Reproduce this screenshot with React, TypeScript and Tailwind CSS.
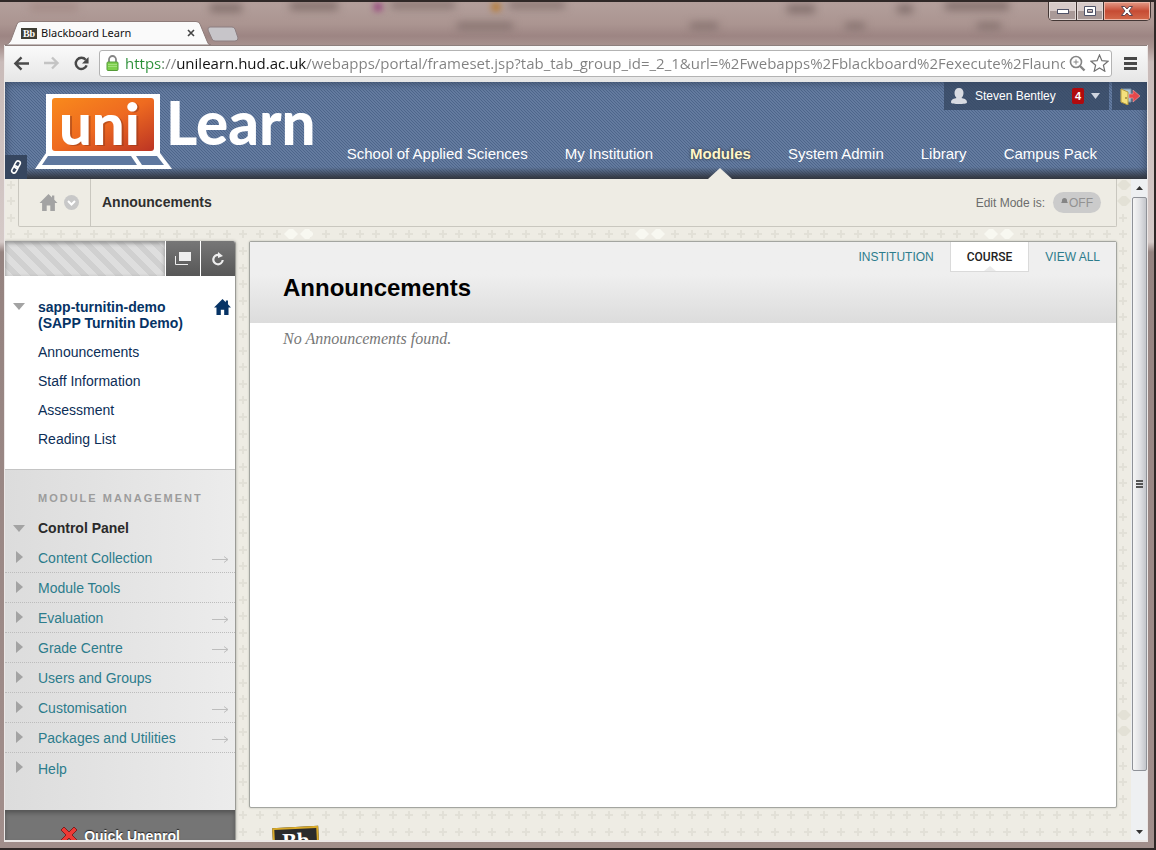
import React from "react";

const URL_TEXT =
  "https://unilearn.hud.ac.uk/webapps/portal/frameset.jsp?tab_tab_group_id=_2_1&url=%2Fwebapps%2Fblackboard%2Fexecute%2Flauncher%3Ftype%3DCourse";

const NAV = [
  "School of Applied Sciences",
  "My Institution",
  "Modules",
  "System Admin",
  "Library",
  "Campus Pack",
];

const MENU = ["Announcements", "Staff Information", "Assessment", "Reading List"];

const PANEL = [
  { label: "Content Collection", arrow: true },
  { label: "Module Tools", arrow: false },
  { label: "Evaluation", arrow: true },
  { label: "Grade Centre", arrow: true },
  { label: "Users and Groups", arrow: false },
  { label: "Customisation", arrow: true },
  { label: "Packages and Utilities", arrow: true },
  { label: "Help", arrow: false },
];

function HomeIcon({ className }: { className: string }) {
  return (
    <svg viewBox="0 0 18 17" className={className} fill="currentColor" aria-hidden="true">
      <path d="M9 0 12.500 3.400V1.500h2.300v4.200L18 9h-2.600v8H10.800v-5.500H7.200V17H2.600V9H0z" />
    </svg>
  );
}

function UniLogo() {
  return (
    <svg width="290" height="80" viewBox="0 0 290 80" role="img" aria-label="uniLearn">
      <defs>
        <linearGradient id="screen" x1="0" y1="0" x2="1" y2="1">
          <stop offset="0" stopColor="#f98a1c" />
          <stop offset="0.5" stopColor="#ee6a20" />
          <stop offset="1" stopColor="#bb3424" />
        </linearGradient>
      </defs>
      <rect x="11" y="2" width="114" height="61" fill="#fff" />
      <rect x="17" y="6" width="102" height="53" rx="3" fill="url(#screen)" />
      <path d="M11 61h114l12 16H0z" fill="#fff" />
      <path d="M13 64h83l6 9H7z" fill="#5f789f" />
      <path d="M101 64h21l7 9h-22z" fill="#5f789f" />
      <g fontFamily="Lato, 'Open Sans', sans-serif" fontWeight="900">
        <text x="26" y="54" fontSize="58" fill="#8f3a1a" opacity="0.5">uni</text>
        <text x="24" y="53" fontSize="58" fill="#fff">uni</text>
        <text x="131" y="53" fontSize="60" fill="#fff">Learn</text>
      </g>
    </svg>
  );
}

function Crosses() {
  const offsets = [6, 23, 39, 56, 72];
  const rows = [6, 22, 39, 55, 72];
  const bright = [[286, 55], [302, 55], [637, 55], [653, 55], [986, 55], [1002, 55], [1119, 6], [1119, 22], [1119, 536], [1119, 552]];
  return (
    <svg className="absolute inset-0 size-full" aria-hidden="true">
      <defs>
        <pattern id="crosses" width="83" height="83" patternUnits="userSpaceOnUse">
          {offsets.map((x) =>
            rows.map((y) => (
              <path key={`${x}-${y}`} d={`M${x - 4} ${y}h8M${x} ${y - 4}v8`} stroke="#e2e0d7" strokeWidth="2" />
            )),
          )}
        </pattern>
      </defs>
      <rect width="100%" height="100%" fill="url(#crosses)" />
      {bright.map(([x, y]) => (
        <path key={`${x}-${y}`} d={`M${x - 7} ${y}l5-5h4l5 5-5 5h-4z`} fill={x > 1100 ? "#e3e1d6" : "#f8f8f1"} />
      ))}
    </svg>
  );
}

function TitleBar() {
  return (
    <div className="relative flex h-[45px] items-end">
      <div className="absolute inset-0 overflow-hidden" aria-hidden="true">
        <div className="absolute top-[3px] left-[25px] h-2 w-12 bg-[#a38a86] blur-[4px]" />
        <div className="absolute top-[4px] left-[205px] h-2 w-8 bg-[#806d69] blur-[4px]" />
        <div className="absolute top-[2px] left-[285px] h-2 w-12 bg-[#806d69] blur-[4px]" />
        <div className="absolute top-[3px] left-[369px] size-2 bg-[#96437c] blur-[3px]" />
        <div className="absolute top-[2px] left-[386px] h-1.5 w-16 bg-[#7f6c69] blur-[4px]" />
        <div className="absolute top-[3px] left-[487px] size-2 bg-[#b8792c] blur-[3px]" />
        <div className="absolute top-[2px] left-[504px] h-1.5 w-14 bg-[#7f6c69] blur-[4px]" />
        <div className="absolute top-[23px] left-[452px] h-1.5 w-14 bg-[#7f6c69] blur-[4px]" />
        <div className="absolute top-[23px] left-[685px] h-1.5 w-7 bg-[#7f6c69] blur-[4px]" />
        <div className="absolute top-[5px] left-[782px] h-2 w-7 bg-[#7f6c69] blur-[4px]" />
        <div className="absolute top-[23px] left-[840px] h-1.5 w-5 bg-[#7f6c69] blur-[4px]" />
        <div className="absolute top-[5px] left-[892px] h-2 w-4 bg-[#7f6c69] blur-[4px]" />
        <div className="absolute top-[2px] left-[940px] h-2 w-16 bg-[#7f6c69] blur-[4px]" />
        <div className="absolute top-[23px] left-[972px] h-1.5 w-6 bg-[#7f6c69] blur-[4px]" />
      </div>
      <div className="relative flex h-6 w-[206px] items-center gap-1 pr-3 pl-4">
        <svg className="absolute inset-0 size-full" viewBox="0 0 206 24" preserveAspectRatio="none" aria-hidden="true">
          <path d="M0 24C4 23 5 21 6 19L12 3Q13 .5 16 .5H191Q194 .5 195 3L202 20Q203 24 206 24z" fill="#fafafa" stroke="#8d7b79" />
        </svg>
        <span className="relative flex h-[11px] w-4 items-center justify-center bg-[#3e3e35] font-['Liberation_Serif',serif] text-[10px] font-bold text-white">
          Bb
        </span>
        <span className="relative flex-1 font-['Noto_Sans','Open_Sans',sans-serif] text-[11px] text-[#111]">Blackboard Learn</span>
        <button aria-label="Close tab" className="relative p-1">
          <svg width="8" height="8" viewBox="0 0 8 8" stroke="#444" strokeWidth="1.600" aria-hidden="true">
            <path d="M1 1l6 6M7 1 1 7" />
          </svg>
        </button>
      </div>
      <button aria-label="New tab" className="relative -ml-1 self-end pb-[3px]">
        <svg width="32" height="16" viewBox="0 0 32 16" aria-hidden="true">
          <path d="M3 1h22q2 0 3 2l3 9q0 3-3 3H8q-2 0-3-2L1 4q-.5-3 2-3z" fill="#c7c5c9" stroke="#8d7f81" />
        </svg>
      </button>
      <div className="relative mt-[2px] mr-[3px] ml-auto flex h-[19px] self-start overflow-hidden rounded-b-[5px] border border-t-0 border-[#433735] text-white">
        <button aria-label="Minimise" className="flex w-7 items-center justify-center border-r border-[#433735] bg-linear-to-b from-[#d7cac8] from-50% to-[#a99997] to-50% shadow-[inset_0_0_0_1px_#e2d8d6]">
          <svg width="12" height="5" viewBox="0 0 12 5" aria-hidden="true">
            <rect x=".5" y=".5" width="11" height="4" fill="#fff" stroke="#505368" />
          </svg>
        </button>
        <button aria-label="Restore" className="flex w-[27px] items-center justify-center border-r border-[#433735] bg-linear-to-b from-[#d7cac8] from-50% to-[#a99997] to-50% shadow-[inset_0_0_0_1px_#e2d8d6]">
          <svg width="12" height="10" viewBox="0 0 12 10" aria-hidden="true">
            <path fillRule="evenodd" d="M.5.5h11v9H.5zM3.500 3.500v3h5v-3z" fill="#fff" stroke="#505368" />
          </svg>
        </button>
        <button aria-label="Close window" className="flex w-[46px] items-center justify-center bg-linear-to-b from-[#e39a88] from-0% via-[#c64b34] via-50% to-[#d3694b] shadow-[inset_0_0_0_1px_#eeb5a6]">
          <svg width="12" height="10" viewBox="0 0 12 10" aria-hidden="true">
            <path d="M.5.5h3.300L6 3 8.200.5h3.300L8 5l3.500 4.500H8.200L6 7 3.800 9.500H.5L4 5z" fill="#fff" stroke="#5d4450" />
          </svg>
        </button>
      </div>
    </div>
  );
}

function Toolbar() {
  return (
    <div className="flex h-[37px] shrink-0 items-center border-t border-[#8d7f7d] bg-linear-to-b from-[#fafafa] to-[#e6e6e6] pr-2.5 pb-0.5 pl-2">
      <button aria-label="Back" className="mr-3.5">
        <svg width="17" height="15" viewBox="0 0 18 16" fill="none" stroke="#4a4a4a" strokeWidth="2.600" aria-hidden="true">
          <path d="M17 8H3M9 1.500 2.500 8 9 14.500" />
        </svg>
      </button>
      <button aria-label="Forward" className="mr-3.5">
        <svg width="16" height="14" viewBox="0 0 16 14" fill="none" stroke="#c4c4c4" strokeWidth="2.400" aria-hidden="true">
          <path d="M0 7h13M8 1.500 13.500 7 8 12.500" />
        </svg>
      </button>
      <button aria-label="Reload" className="mr-2.5">
        <svg width="15" height="15" viewBox="0 0 16 16" aria-hidden="true">
          <path d="M12.500 4A6 6 0 1 0 13.500 10" fill="none" stroke="#484848" strokeWidth="2.600" />
          <path d="M15.500 1v7h-7z" fill="#484848" />
        </svg>
      </button>
      <div className="flex h-[27px] min-w-0 flex-1 items-center rounded-[3px] border border-[#b3b3b3] bg-white px-1.5 font-['Open_Sans','Noto_Sans',sans-serif] text-[15px]">
        <svg width="13" height="16" viewBox="0 0 13 16" className="mr-1.5 shrink-0" aria-hidden="true">
          <path d="M3 8V4.500a3.500 3.500 0 0 1 7 0V8" fill="none" stroke="#858585" strokeWidth="1.800" />
          <rect x="1" y="7" width="11" height="8.500" rx="1" fill="#7ed04c" stroke="#559b38" />
          <path d="M2 9.500h9M2 11.500h9" stroke="#a3e07c" />
        </svg>
        <input
          aria-label="Address"
          readOnly
          value={URL_TEXT}
          className="min-w-0 flex-1 bg-[linear-gradient(to_right,#2a8f38_0_38px,#808080_38px_51px,#111_51px_182px,#808080_182px)] bg-clip-text text-transparent outline-none"
        />
        <svg width="17" height="17" viewBox="0 0 17 17" fill="none" stroke="#858585" className="mr-1 ml-1 shrink-0" aria-hidden="true">
          <circle cx="7" cy="7" r="5.500" strokeWidth="1.600" />
          <path d="M4.500 7h5M7 4.500v5" />
          <path d="m11 11 4.500 4.500" strokeWidth="2.400" />
        </svg>
        <svg width="19" height="18" viewBox="0 0 19 18" fill="none" stroke="#707070" strokeWidth="1.200" className="-mr-1 shrink-0" aria-hidden="true">
          <path d="m9.500 1 2.400 5.700 6.100.5-4.600 4 1.400 6-5.300-3.300-5.300 3.300 1.400-6-4.600-4 6.100-.5z" />
        </svg>
      </div>
      <button aria-label="Menu" className="ml-3 flex w-[13px] flex-col gap-0.5">
        <span className="h-[3px] bg-[#484848]" />
        <span className="h-[3px] bg-[#484848]" />
        <span className="h-[3px] bg-[#484848]" />
      </button>
    </div>
  );
}

function Header() {
  return (
    <header className="relative flex h-[97px] shrink-0 items-stretch justify-between overflow-hidden bg-[linear-gradient(45deg,#647b9f_0_25%,#4d658a_25%_50%,#647b9f_50%_75%,#4d658a_75%)] bg-size-[3px_3px] shadow-[inset_0_0_9px_#34425a]">
      <div className="absolute inset-x-0 bottom-0 h-3 bg-linear-to-b from-transparent to-[#33373f]" />
      <a href="#home" className="relative ml-[30px] mt-2.5 block">
        <UniLogo />
      </a>
      <a href="#link" aria-label="Permanent link" className="absolute bottom-0 left-0 flex h-6 w-[22px] items-center justify-center bg-[#36465f]">
        <svg width="12" height="14" viewBox="0 0 12 14" fill="none" stroke="#fff" strokeWidth="1.600" aria-hidden="true">
          <rect x="5" y="0.800" width="4.600" height="7.400" rx="2.300" transform="rotate(30 7.300 4.500)" />
          <rect x="2.400" y="5.800" width="4.600" height="7.400" rx="2.300" transform="rotate(30 4.700 9.500)" />
        </svg>
      </a>
      <div className="relative flex flex-col items-end justify-between">
        <div className="flex h-7 text-[12px] text-white">
          <button className="flex w-[165px] items-center bg-[#34455f]/75 pr-[9px] pl-1.5">
            <svg width="18" height="17" viewBox="0 0 18 17" fill="#d8dbe2" aria-hidden="true">
              <path d="M9 0c3 0 4.500 2 4.500 5 0 2.300-1 4-2 5 2 .7 5.500.8 5.500 4.500 0 2-16 2-16 0C1 10.800 4.500 10.700 6.500 10c-1-1-2-2.700-2-5C4.500 2 6 0 9 0z" />
            </svg>
            <span className="ml-[7px]">Steven Bentley</span>
            <span className="ml-auto rounded-[2px] bg-[#b10a0d] px-[3px] text-[11px] leading-4 font-bold">4</span>
            <svg width="9" height="6" viewBox="0 0 9 6" fill="#cfd5df" className="ml-[7px]" aria-hidden="true">
              <path d="M0 0h9L4.500 6z" />
            </svg>
          </button>
          <button aria-label="Log out" className="ml-[3px] flex w-[35px] items-center justify-center bg-[#34455f]/75">
            <svg width="20" height="17" viewBox="0 0 20 17" aria-hidden="true">
              <path d="M1 1h10v13H1z" fill="#a9c6de" stroke="#7a90a5" />
              <path d="M1 1l7 3v13l-7-3z" fill="#f5e07c" stroke="#b59a3c" />
              <path d="M6 9v2" stroke="#745f1d" />
              <path d="M9 6h4V2l7 6-7 6v-4H9z" fill="#e5484c" stroke="#f3aaa8" strokeWidth=".6" />
            </svg>
          </button>
        </div>
        <nav className="flex gap-[37px] pr-[50px] text-[15px] leading-5 text-white">
          {NAV.map((n) =>
            n === "Modules" ? (
              <a key={n} href="#modules" className="relative pb-[15px] font-bold text-[#fff6c9] [text-shadow:0_0_3px_#2a2a2a]">
                {n}
                <svg width="24" height="11" viewBox="0 0 24 11" fill="#eeece4" className="absolute bottom-0 left-1/2 -ml-3" aria-hidden="true">
                  <path d="M0 11 12 0l12 11z" />
                </svg>
              </a>
            ) : (
              <a key={n} href="#nav" className="pb-[15px] whitespace-nowrap">
                {n}
              </a>
            ),
          )}
        </nav>
      </div>
    </header>
  );
}

function Sidebar() {
  return (
    <aside className="flex w-[231px] flex-col overflow-hidden rounded-tr-[3px] border-r border-[#9b9b96] bg-white text-[14px] shadow-[0_0_3px_#a5a59e]">
      <div className="flex h-[35px] shrink-0 bg-white">
        <div className="mr-px flex-1 bg-[repeating-linear-gradient(45deg,#dedede_0_6px,#d0d0d0_6px_12px)] shadow-[inset_0_2px_4px_#8c8c8c]" />
        <button aria-label="Display in new window" className="mr-px flex w-[34px] items-center justify-center bg-linear-to-b from-[#777] to-[#575757]">
          <svg width="16" height="13" viewBox="0 0 16 13" aria-hidden="true">
            <rect x="4" y="0" width="12" height="9" fill="#efefef" />
            <path d="M.5 4v8.500H13" fill="none" stroke="#efefef" />
          </svg>
        </button>
        <button aria-label="Refresh" className="flex w-[34px] items-center justify-center bg-linear-to-b from-[#777] to-[#575757]">
          <svg width="14" height="14" viewBox="0 0 14 14" aria-hidden="true">
            <path d="M8 3A4.700 4.700 0 1 0 11.700 8" fill="none" stroke="#eee" strokeWidth="2.200" />
            <path d="M7 0v6l5-2z" fill="#eee" />
          </svg>
        </button>
      </div>
      <div className="h-[194px] shrink-0 border-b border-[#c4c4c4] pt-[23px] text-[#0c2e57]">
        <div className="flex items-start pr-1">
          <button aria-label="Collapse course menu" className="mt-1 ml-2 w-[25px]">
            <svg width="12" height="7" viewBox="0 0 12 7" fill="#a3a3a3" aria-hidden="true">
              <path d="M0 0h12L6 7z" />
            </svg>
          </button>
          <h2 className="flex-1 leading-4 font-bold text-[#063365]">
            sapp-turnitin-demo
            <br />
            (SAPP Turnitin Demo)
          </h2>
          <HomeIcon className="h-4 w-[17px] text-[#063365]" />
        </div>
        <ul className="mt-[7px] ml-[33px]">
          {MENU.map((m) => (
            <li key={m} className="h-[29px] leading-7">
              <a href="#menu">{m}</a>
            </li>
          ))}
        </ul>
      </div>
      <div className="h-[340px] shrink-0 bg-linear-to-r from-[#dcdcdc] to-[#ececec] pt-5">
        <h3 className="ml-[33px] text-[11px] leading-4 font-bold tracking-[2px] whitespace-nowrap text-[#9c9c9c]">MODULE MANAGEMENT</h3>
        <div className="mt-[7px] flex h-[30px] items-center pl-2">
          <svg width="12" height="7" viewBox="0 0 12 7" fill="#a3a3a3" className="mr-[13px]" aria-hidden="true">
            <path d="M0 0h12L6 7z" />
          </svg>
          <span className="font-bold text-[#2a2a2a]">Control Panel</span>
        </div>
        <ul>
          {PANEL.map((p) => (
            <li key={p.label} className="flex h-[30px] items-center border-b border-dotted border-[#bcbcbc] pt-0.5 pr-1.5 pl-[11px] text-[#2c7c8c] last:border-0">
              <svg width="7" height="12" viewBox="0 0 7 12" fill="#a3a3a3" className="mr-[15px] mb-1" aria-hidden="true">
                <path d="M0 0v12l7-6z" />
              </svg>
              <a href="#panel" className="flex-1">
                {p.label}
              </a>
              {p.arrow && (
                <svg width="17" height="8" viewBox="0 0 17 8" fill="none" stroke="#bdbdbd" className="mt-px" aria-hidden="true">
                  <path d="M0 4.500h16M12 1.500l4 3-4 3" />
                </svg>
              )}
            </li>
          ))}
        </ul>
      </div>
      <div className="flex min-h-0 flex-1 items-start justify-center bg-[#757575] pt-4 shadow-[inset_0_3px_4px_#555]">
        <svg width="18" height="18" viewBox="0 0 18 18" className="mr-1.5" aria-hidden="true">
          <path d="M1 4 4 1l5 5 5-5 3 3-5 5 5 5-3 3-5-5-5 5-3-3 5-5z" fill="#ee3a35" stroke="#7c2020" />
        </svg>
        <a href="#unenrol" className="leading-5 font-bold text-white [text-shadow:0_-1px_1px_#222]">
          Quick Unenrol
        </a>
      </div>
    </aside>
  );
}

function Announcements() {
  return (
    <div className="flex min-w-0 flex-1 flex-col">
      <main className="flex-1 rounded-[2px] border border-[#a3a5a0] bg-white shadow-[0_0_2px_#b5b5aa]">
        <div className="h-[81px] bg-linear-to-b from-[#efefef] from-40% to-[#dcdcdc]">
          <div className="flex h-[30px] justify-end text-[12px] leading-[30px] text-[#2c7c8c]">
            <a href="#institution" className="px-4">INSTITUTION</a>
            <a href="#course" aria-current="page" className="relative border border-t-0 border-[#dadada] bg-white px-4 font-[Roboto,sans-serif] font-medium text-[#222]">
              COURSE
              <svg width="12" height="5" viewBox="0 0 12 5" fill="#ebebeb" className="absolute bottom-0 left-1/2 -ml-1.5" aria-hidden="true">
                <path d="M0 5 6 0l6 5z" />
              </svg>
            </a>
            <a href="#all" className="px-4">VIEW ALL</a>
          </div>
          <h1 className="pl-[33px] text-[24px] leading-8 font-bold text-black">Announcements</h1>
        </div>
        <p className="pt-1.5 pl-[33px] font-['Liberation_Serif',serif] text-[16px] leading-5 text-[#777] italic">No Announcements found.</p>
      </main>
      <footer className="flex h-8 shrink-0 items-start overflow-hidden pt-[19px] pl-6">
        <div className="h-8 w-[46px] -rotate-3 overflow-hidden border-2 border-[#d9aa2a] bg-[#2b2b2b] text-center font-['Liberation_Serif',serif] text-[22px] leading-6 font-bold text-white">
          Bb
        </div>
      </footer>
    </div>
  );
}

function Scrollbar() {
  return (
    <div className="flex w-4 flex-col items-center bg-[#eef0f2]" aria-hidden="true">
      <div className="flex h-[18px] items-center">
        <svg width="7" height="4" viewBox="0 0 7 4" fill="#333">
          <path d="M3.500 0 7 4H0z" />
        </svg>
      </div>
      <div className="flex w-[15px] flex-1 flex-col items-center justify-center gap-px rounded-[2px] border border-[#8f9298] bg-linear-to-r from-[#f6f6f6] via-[#e2e3e6] to-[#c3c5ca]">
        <div className="h-[2px] w-[7px] bg-[#555]" />
        <div className="h-[2px] w-[7px] bg-[#555]" />
        <div className="h-[2px] w-[7px] bg-[#555]" />
      </div>
      <div className="flex h-[69px] items-end pb-1.5">
        <svg width="7" height="4" viewBox="0 0 7 4" fill="#333">
          <path d="M0 0h7L3.500 4z" />
        </svg>
      </div>
    </div>
  );
}

export default function App() {
  return (
    <div className="flex h-screen flex-col overflow-hidden border-t-2 border-r-2 border-b-2 border-[#2f2827] bg-[linear-gradient(to_bottom,#b39f9b_0,#ab9591_22px,#9d8583_34px,#a89390_45px,#c9bbb9_60px,#d5cac8_240px,#958380_250px,#a18e8b_100%)] font-['Liberation_Sans',Arial,sans-serif]">
      <div className="-mt-[2px] pl-[5px]">
        <TitleBar />
      </div>
      <div className="mr-1.5 mb-1.5 ml-1 flex min-h-0 flex-1 flex-col border-r border-b-2 border-l border-[#ece8e7]">
        <Toolbar />
        <Header />
        <div className="flex min-h-0 flex-1">
          <div className="relative min-w-0 flex-1 overflow-hidden bg-[#eeece4]">
            <Crosses />
            <div className="relative flex h-full flex-col">
              <div className="mr-3.5 ml-[13px] flex h-12 shrink-0 items-stretch rounded-b-[2px] border border-t-0 border-[#c9c7bf] bg-[#eeece4]">
                <div className="flex w-[72px] items-center gap-1.5 border-r border-[#c9c7bf] pl-5">
                  <HomeIcon className="h-[17px] w-[19px] text-[#a3a3a3]" />
                  <button aria-label="More options">
                    <svg width="15" height="15" viewBox="0 0 15 15" aria-hidden="true">
                      <circle cx="7.500" cy="7.500" r="7.500" fill="#c8c8c8" />
                      <path d="m4 6 3.500 3.500L11 6" fill="none" stroke="#fff" strokeWidth="2" />
                    </svg>
                  </button>
                </div>
                <span className="self-center pl-[11px] text-[14px] font-bold text-[#2f2f2f]">Announcements</span>
                <div className="ml-auto flex items-center gap-2 pr-[15px] text-[12px] text-[#6c6c6c]">
                  <span id="edit-mode">Edit Mode is:</span>
                  <button aria-labelledby="edit-mode" className="flex h-[21px] w-12 items-center justify-center gap-px rounded-full bg-[#cbcbcb] text-[#929292]">
                    <svg width="7" height="6" viewBox="0 0 7 6" fill="#858585" className="mb-1" aria-hidden="true">
                      <path d="M0 5Q1 4 1 2.500a2.500 2.500 0 0 1 5 0Q6 4 7 5z" />
                    </svg>
                    OFF
                  </button>
                </div>
              </div>
              <div className="mt-3.5 mr-3.5 flex min-h-0 flex-1 items-stretch gap-[13px]">
                <Sidebar />
                <Announcements />
              </div>
            </div>
          </div>
          <Scrollbar />
        </div>
      </div>
    </div>
  );
}
